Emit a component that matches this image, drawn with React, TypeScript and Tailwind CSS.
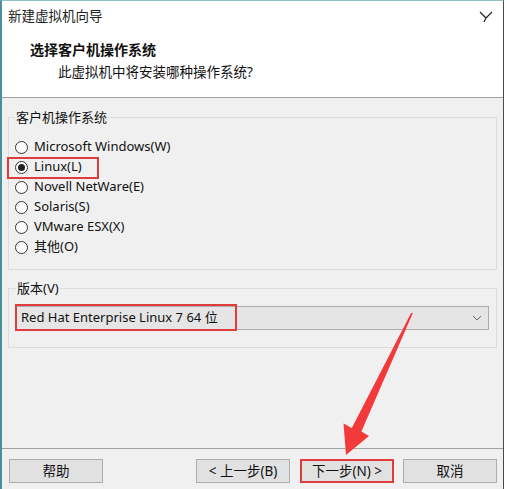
import React from "react"

const font = { fontFamily: '"Noto Sans", "Noto Sans CJK SC", sans-serif' }

function Radio({ label, checked }: { label: string; checked?: boolean }) {
    return (
        <div className="h-[20px] flex items-center gap-[6px]">
            <span className="w-[13px] h-[13px] rounded-full border border-[#333] bg-white flex items-center justify-center">
                {checked && <span className="w-[7px] h-[7px] rounded-full bg-[#222]" />}
            </span>
            <span>{label}</span>
        </div>
    )
}

function Button({ label, className = "" }: { label: string; className?: string }) {
    return (
        <button className={"w-[94px] h-[24px] bg-[#e1e1e1] border border-[#adadad] text-[13.5px] text-[#111] flex items-center justify-center " + className}>
            {label}
        </button>
    )
}

export default function App() {
    return (
        <div className="relative w-[507px] h-[489px] bg-white overflow-hidden text-[13px] text-[#111]" style={font}>
            <div className="w-[504px] h-full flex flex-col border-l-2 border-l-[#4b8f9b] border-t border-t-[#8fc1c9] border-r border-r-[#4a4a4a]">
                {/* title bar */}
                <div className="h-[31px] bg-white flex items-center justify-between pl-[6px] pr-[10px]">
                    <span className="text-[13.5px] text-[#222]">新建虚拟机向导</span>
                    <svg width="14" height="14" viewBox="0 0 14 14" fill="none" stroke="#222" strokeWidth="1.2">
                        <path d="M1 2l6 6M13 2L7 8M7 8l-2 4" />
                    </svg>
                </div>

                {/* header */}
                <div className="h-[66px] bg-white border-b border-[#a0a0a0] pl-[28px] pt-[6px]">
                    <div className="text-[14px] font-bold leading-[24px]">选择客户机操作系统</div>
                    <div className="text-[13.5px] leading-[20px] pl-[28px]">此虚拟机中将安装哪种操作系统?</div>
                </div>

                {/* body */}
                <div className="flex-1 bg-[#f0f0f0] px-[6px] pt-[9px]">
                    <fieldset className="border border-[#dcdcdc] px-[6px] pb-[12px]">
                        <legend className="px-[1px] leading-[20px]">客户机操作系统</legend>
                        <div className="pt-[10px] flex flex-col">
                            <Radio label="Microsoft Windows(W)" />
                            <div className="relative">
                                <Radio label="Linux(L)" checked />
                                <span className="absolute left-[-8px] top-[0px] w-[92px] h-[22px] border-2 border-[#e03c3c]" />
                            </div>
                            <Radio label="Novell NetWare(E)" />
                            <Radio label="Solaris(S)" />
                            <Radio label="VMware ESX(X)" />
                            <Radio label="其他(O)" />
                        </div>
                    </fieldset>

                    <fieldset className="mt-[8px] border border-[#dcdcdc] px-[7px] pb-[17px]">
                        <legend className="px-[1px] leading-[20px]">版本(V)</legend>
                        <div className="relative mt-[8px] h-[24px] bg-[#e5e5e5] border border-[#adadad] flex items-center justify-between pl-[4px] pr-[6px]">
                            <span>Red Hat Enterprise Linux 7 64 位</span>
                            <svg width="10" height="6" viewBox="0 0 10 6" fill="none" stroke="#666" strokeWidth="1">
                                <path d="M1 1l4 4 4-4" />
                            </svg>
                            <span className="absolute left-[-2px] top-[-3px] w-[222px] h-[27px] border-2 border-[#e03c3c]" />
                        </div>
                    </fieldset>
                </div>

                {/* footer */}
                <div className="h-[41px] bg-[#f0f0f0] border-t border-[#a0a0a0] flex items-start pt-[10px] pl-[7px] pr-[6px]">
                    <Button label="帮助" />
                    <div className="flex-1" />
                    <Button label="< 上一步(B)" />
                    <Button label="下一步(N) >" className="ml-[10px] border-2 border-[#e03c3c]" />
                    <Button label="取消" className="ml-[9px]" />
                </div>
            </div>

            {/* annotation arrow */}
            <svg className="absolute left-0 top-0 pointer-events-none" width="507" height="489" viewBox="0 0 507 489">
                <polygon
                    points="412.8,313.3 361.4,431.5 369,436 346,455 343.5,423.5 351.8,428 411.2,312.7"
                    fill="#f23a3a"
                />
            </svg>
        </div>
    )
}
